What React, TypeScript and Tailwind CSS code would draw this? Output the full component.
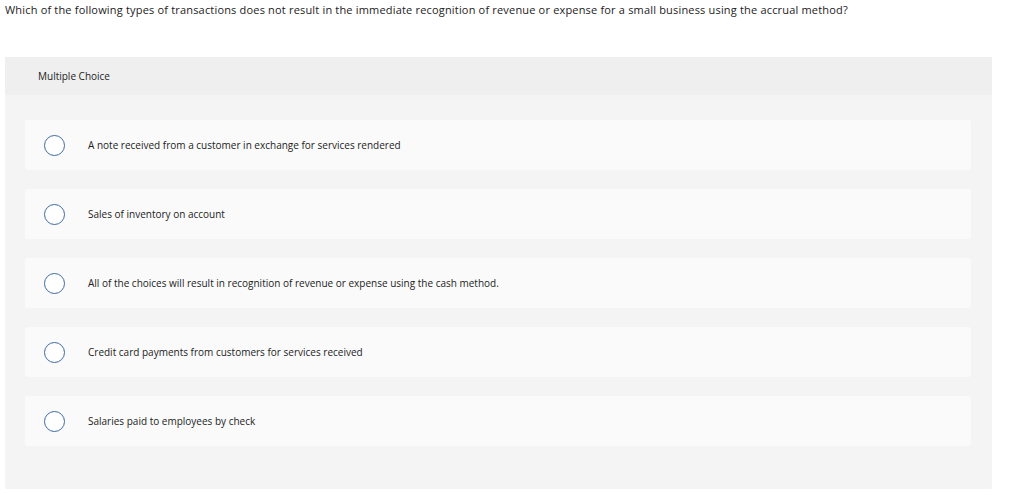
import React from "react";

const options = [
  "A note received from a customer in exchange for services rendered",
  "Sales of inventory on account",
  "All of the choices will result in recognition of revenue or expense using the cash method.",
  "Credit card payments from customers for services received",
  "Salaries paid to employees by check",
];

export default function App() {
  return (
    <div className="w-[1024px] h-[495px] bg-white text-[#222] font-['Open_Sans',sans-serif]">
      <p className="pl-[5px] pt-[3px] text-[11px] leading-[14px] tracking-[0.18px] h-[57px]">
        Which of the following types of transactions does not result in the immediate recognition of revenue or expense for a small business using the accrual method?
      </p>
      <div className="ml-[5px] w-[987px] h-[432px] rounded-[2px] bg-[#f4f4f4] flex flex-col">
        <div className="h-[38px] bg-[#efefef] flex items-center pl-[33px] pt-[1px] text-[10px] text-[#222]">
          Multiple Choice
        </div>
        <div className="flex flex-col gap-[19px] pt-[25px] px-[20px]">
          {options.map((o) => (
            <div key={o} className="h-[50px] w-[946px] bg-[#fafafa] rounded-[3px] flex items-center">
              <div className="ml-[19px] w-[21px] h-[21px] rounded-full border border-[#3d6aa3] bg-white" />
              <span className="ml-[23px] text-[10px] text-[#222]">{o}</span>
            </div>
          ))}
        </div>
      </div>
    </div>
  );
}
